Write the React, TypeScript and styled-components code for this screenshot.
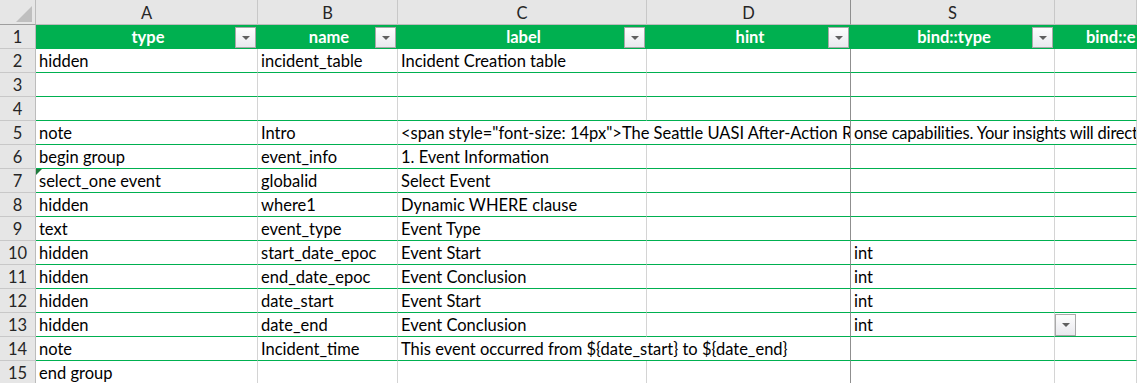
import * as React from 'react';
import styled, { createGlobalStyle, css } from 'styled-components';

const GREEN = '#00b050';
const GRID = '#d4d4d4';
const HIDDEN_EDGE = '#8f8f8f';

type Row = {
  a?: string;
  b?: string;
  c?: string;
  s?: string;
  cWide?: boolean;
  sWide?: string;
  flag?: boolean;
  picker?: boolean;
};

const rows: Row[] = [
  { a: 'hidden', b: 'incident_table', c: 'Incident Creation table' },
  {},
  {},
  {
    a: 'note',
    b: 'Intro',
    c: '<span style="font-size: 14px">The Seattle UASI After-Action R',
    cWide: true,
    sWide: 'onse capabilities. Your insights will direct',
  },
  { a: 'begin group', b: 'event_info', c: '1. Event Information' },
  { a: 'select_one event', b: 'globalid', c: 'Select Event', flag: true },
  { a: 'hidden', b: 'where1', c: 'Dynamic WHERE clause' },
  { a: 'text', b: 'event_type', c: 'Event Type' },
  { a: 'hidden', b: 'start_date_epoc', c: 'Event Start', s: 'int' },
  { a: 'hidden', b: 'end_date_epoc', c: 'Event Conclusion', s: 'int' },
  { a: 'hidden', b: 'date_start', c: 'Event Start', s: 'int' },
  { a: 'hidden', b: 'date_end', c: 'Event Conclusion', s: 'int', picker: true },
  {
    a: 'note',
    b: 'Incident_time',
    c: 'This event occurred from ${date_start} to ${date_end}',
    cWide: true,
  },
  { a: 'end group' },
];

const headers = [
  { letter: 'A', title: 'type' },
  { letter: 'B', title: 'name' },
  { letter: 'C', title: 'label' },
  { letter: 'D', title: 'hint', edge: true },
  { letter: 'S', title: 'bind::type' },
];

const GlobalStyle = createGlobalStyle`
  html, body {
    margin: 0;
    padding: 0;
    background: #ffffff;
    overflow: hidden;
  }
`;

const Sheet = styled.div`
  display: grid;
  grid-template-columns: 36px 222px 140px 249px 204px 204px 1fr;
  grid-template-rows: 25px;
  grid-auto-rows: 24px;
  width: 1137px;
  height: 383px;
  overflow: hidden;
  font-family: Lato, 'Liberation Sans', sans-serif;
  font-size: 16.5px;
  color: #000;
`;

const Corner = styled.div`
  position: relative;
  background: #e6e6e6;
  border-right: 1px solid #bcbcbc;
  border-bottom: 1px solid #9e9e9e;

  &::after {
    content: '';
    position: absolute;
    right: 3px;
    bottom: 2px;
    border-style: solid;
    border-width: 0 0 16px 16px;
    border-color: transparent transparent #bfbfbf transparent;
  }
`;

const ColHead = styled.div<{ $edge?: boolean }>`
  display: flex;
  align-items: center;
  justify-content: center;
  background: #e6e6e6;
  color: #262626;
  border-right: 1px solid ${p => (p.$edge ? HIDDEN_EDGE : '#c8c8c8')};
  border-bottom: 1px solid #bcbcbc;
  padding-top: 1px;
`;

const RowHead = styled.div`
  display: flex;
  align-items: center;
  justify-content: center;
  background: #e6e6e6;
  color: #262626;
  border-right: 1px solid #bcbcbc;
  border-bottom: 1px solid #c8c8c8;
  padding-top: 1px;
`;

const Cell = styled.div<{
  $span?: number;
  $edge?: boolean;
  $title?: boolean;
  $indent?: number;
  $tight?: boolean;
}>`
  position: relative;
  grid-column: span ${p => p.$span ?? 1};
  padding: 1px 0 0 ${p => p.$indent ?? 3}px;
  line-height: 23px;
  white-space: nowrap;
  overflow: hidden;
  letter-spacing: ${p => (p.$tight ? '-0.2px' : 'normal')};
  border-right: 1px solid ${p => (p.$edge ? HIDDEN_EDGE : GRID)};
  border-bottom: 1px solid ${GREEN};

  ${p =>
    p.$title &&
    css`
      background: ${GREEN};
      color: #ffffff;
      font-weight: 700;
      text-align: center;
      border-right-color: ${GREEN};
      line-height: 22px;
    `}
`;

const LeftTitle = styled(Cell)`
  text-align: left;
`;

const FilterButton = styled.span<{ $top?: number }>`
  position: absolute;
  top: ${p => p.$top ?? 2}px;
  right: 1px;
  width: 19px;
  height: 19px;
  display: flex;
  align-items: center;
  justify-content: center;
  border: 1px solid #a9a9a9;
  background: linear-gradient(#fdfdfd, #e9e9ee);

  &::after {
    content: '';
    border-style: solid;
    border-width: 4px 4px 0 4px;
    border-color: #5f5f5f transparent transparent transparent;
  }
`;

const PickerButton = styled(FilterButton)`
  left: 0;
  right: auto;
  top: 1px;
  height: 20px;
`;

const ErrorFlag = styled.span`
  position: absolute;
  top: 0;
  left: 0;
  border-style: solid;
  border-width: 6px 6px 0 0;
  border-color: #1e7b3c transparent transparent transparent;
`;

const App: React.FunctionComponent = () => (
  <Sheet>
    <GlobalStyle />
    <Corner />
    {headers.map(h => (
      <ColHead key={h.letter} $edge={h.edge}>
        {h.letter}
      </ColHead>
    ))}
    <ColHead />

    <RowHead>1</RowHead>
    {headers.map(h => (
      <Cell key={h.title} $title>
        {h.title}
        <FilterButton />
      </Cell>
    ))}
    <LeftTitle $title $indent={31}>
      bind::e
    </LeftTitle>

    {rows.map((r, i) => (
      <React.Fragment key={i}>
        <RowHead>{i + 2}</RowHead>
        <Cell>
          {r.flag && <ErrorFlag />}
          {r.a}
        </Cell>
        <Cell>{r.b}</Cell>
        {r.cWide ? (
          <Cell $span={2} $edge>
            {r.c}
          </Cell>
        ) : (
          <>
            <Cell>{r.c}</Cell>
            <Cell $edge />
          </>
        )}
        {r.sWide ? (
          <Cell $span={2} $tight>
            {r.sWide}
          </Cell>
        ) : (
          <>
            <Cell>{r.s}</Cell>
            <Cell>{r.picker && <PickerButton />}</Cell>
          </>
        )}
      </React.Fragment>
    ))}
  </Sheet>
);

export default App;
